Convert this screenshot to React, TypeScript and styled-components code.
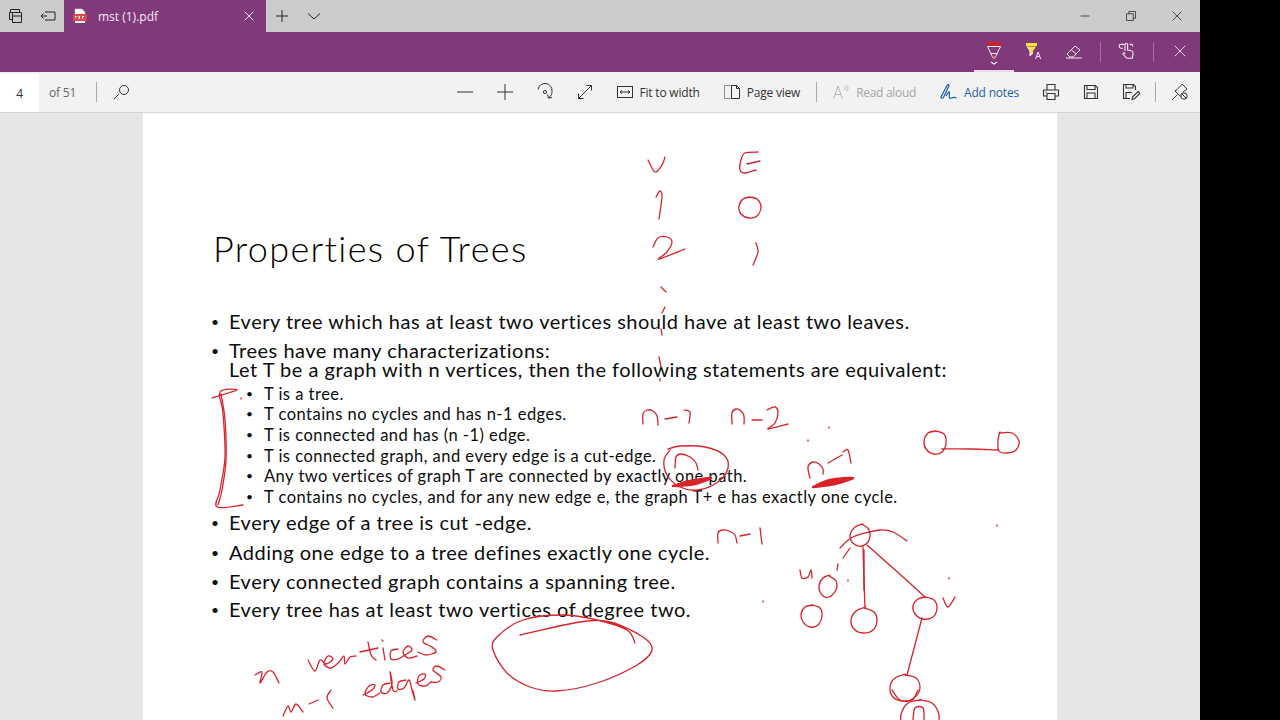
import styled, { createGlobalStyle } from 'styled-components'

const GlobalStyle = createGlobalStyle`
  html, body, #root {
    margin: 0;
    height: 100%;
    background: #000;
    overflow: hidden;
  }
`

const Screen = styled.div`
  width: 1200px;
  height: 720px;
  display: flex;
  flex-direction: column;
  overflow: hidden;
  font-family: 'Open Sans', 'Noto Sans', sans-serif;
`

const TabBar = styled.div`
  height: 32px;
  flex: none;
  display: flex;
  align-items: center;
  background: #cccccc;
`

const TabIcon = styled.div`
  width: 32px;
  height: 32px;
  flex: none;
  display: flex;
  align-items: center;
  justify-content: center;
  color: #222;
`

const Tab = styled.div`
  width: 202px;
  height: 32px;
  flex: none;
  display: flex;
  align-items: center;
  padding: 0 10px 0 8px;
  box-sizing: border-box;
  gap: 10px;
  background: #80397b;
  color: #f6ecf5;
  font-size: 12px;
`

const TabTitle = styled.span`
  flex: 1;
`

const WindowButtons = styled.div`
  margin-left: auto;
  display: flex;
`

const WindowButton = styled.div`
  width: 46px;
  height: 32px;
  display: flex;
  align-items: center;
  justify-content: center;
  color: #222;
`

const InkBar = styled.div`
  height: 40px;
  flex: none;
  display: flex;
  align-items: center;
  justify-content: flex-end;
  background: #80397b;
  color: #f4e9f3;
`

const InkButton = styled.div<{ $active?: boolean }>`
  width: 40px;
  height: 40px;
  display: flex;
  align-items: center;
  justify-content: center;
  box-sizing: border-box;
  padding-top: ${(p) => (p.$active ? 6 : 0)}px;
  border-bottom: 2px solid ${(p) => (p.$active ? '#f0d8ee' : 'transparent')};
`

const InkDivider = styled.div`
  width: 1px;
  height: 20px;
  margin: 0 6px;
  background: #a870a4;
`

const ToolBar = styled.div`
  height: 41px;
  flex: none;
  display: flex;
  align-items: center;
  background: #f2f2f2;
  border-bottom: 1px solid #d4d4d4;
  box-sizing: border-box;
  color: #333;
  font-size: 12px;
  letter-spacing: -0.2px;
`

const PageBox = styled.div`
  width: 39px;
  height: 38px;
  align-self: flex-end;
  display: flex;
  align-items: center;
  justify-content: center;
  background: #fff;
  color: #333;
  font-size: 12px;
`

const PageCount = styled.span`
  margin: 0 16px 0 10px;
  color: #666;
`

const ToolDivider = styled.div`
  width: 1px;
  height: 20px;
  margin: 0 4px;
  background: #a8a8a8;
`

const ToolGroup = styled.div`
  margin-left: auto;
  display: flex;
  align-items: center;
`

const IconButton = styled.div`
  width: 40px;
  height: 40px;
  flex: none;
  display: flex;
  align-items: center;
  justify-content: center;
  color: #333;
`

const TextButton = styled.div<{ $tone?: string }>`
  height: 40px;
  padding: 0 12px;
  display: flex;
  align-items: center;
  gap: 7px;
  white-space: nowrap;
  color: ${(p) => p.$tone || '#333'};
`

const ReadButton = styled(TextButton)`
  padding: 0 11px 0 12px;
  letter-spacing: -0.3px;
`

const Viewer = styled.div`
  flex: 1;
  min-height: 0;
  display: flex;
  justify-content: center;
  overflow: hidden;
  background: #e6e6e6;
`

const Page = styled.div`
  position: relative;
  width: 914px;
  flex: none;
  padding: 113px 0 0 70px;
  box-sizing: border-box;
  background: #fff;
  color: #0c0c0c;
  font-family: 'Lato', 'Open Sans', sans-serif;
`

const Title = styled.h1`
  margin: 0 0 42px;
  font-size: 36px;
  line-height: 44px;
  font-weight: 300;
  letter-spacing: 1.35px;
  color: #000;
`

const Bullets = styled.ul`
  margin: 0;
  padding: 0;
  list-style: none;
`

const Bullet = styled.li<{ $gap?: number }>`
  position: relative;
  padding-left: 16px;
  margin-top: ${(p) => p.$gap || 0}px;
  font-size: 20px;
  line-height: 19.5px;
  letter-spacing: 0.5px;
  white-space: nowrap;

  &::before {
    content: '•';
    position: absolute;
    left: -2px;
    font-size: 14px;
  }
`

const SubBullets = styled.ul`
  margin: 4px 0 0;
  padding: 0 0 0 35px;
  list-style: none;
`

const SubBullet = styled.li`
  position: relative;
  height: 20.7px;
  font-size: 16.5px;
  line-height: 20.7px;
  letter-spacing: 0.48px;
  white-space: nowrap;

  &::before {
    content: '•';
    position: absolute;
    left: -18px;
    font-size: 12px;
  }
`

const Ink = styled.svg`
  position: absolute;
  left: 0;
  top: 0;
  pointer-events: none;
`

const Line = ({ d, size = 16 }: { d: string; size?: number }) => (
  <svg width={size} height={size} viewBox="0 0 16 16" fill="none" stroke="currentColor" strokeWidth="1">
    <path d={d} />
  </svg>
)

const PdfBadge = () => (
  <svg width="16" height="16" viewBox="0 0 16 16">
    <path d="M3 1h7l3 3v3H3z" fill="#fff" stroke="#c8c8c8" strokeWidth="0.6" />
    <rect x="1" y="6" width="14" height="7" fill="#e0474c" />
    <path d="M3 13h10v2H3z" fill="#f5f5f5" />
    <path d="M3 8h1.5v1.5H3zM6.5 8H8v3H6.5zM10 8h2v1h-1v2h-1z" fill="#fff" />
  </svg>
)

const PenIcon = () => (
  <svg width="16" height="24" viewBox="0 0 16 24" fill="none" stroke="currentColor" strokeWidth="1">
    <rect x="1" y="0" width="14" height="4" fill="#c8232c" stroke="none" />
    <path d="M1.5 4.5L7 16h2l5.5-11.5zM5 11.5h6" />
    <path d="M6.5 14h3l-.5 2H7z" fill="#e0555a" stroke="none" />
    <path d="M5 20l3 2 3-2" strokeWidth="1.2" />
  </svg>
)

const HighlightIcon = () => (
  <svg width="18" height="18" viewBox="0 0 18 18" fill="none" stroke="currentColor" strokeWidth="1">
    <rect x="1" y="1" width="11" height="3" fill="#f5e33c" stroke="none" />
    <path d="M2 4.5l3 4.5v5l3-3V9l3-4.5z" fill="#f5e33c" stroke="none" />
    <path d="M2 4.5l3 4.5v5l3-3" />
    <path d="M10.5 17l2.6-7 2.6 7M11.5 14.6h3.2" />
  </svg>
)

const EraserIcon = () => (
  <svg width="18" height="18" viewBox="0 0 18 18" fill="none" stroke="currentColor" strokeWidth="1">
    <path d="M2 12l8-8 5 4-7 7H5zM6.5 8l5 4M1 16h16" />
  </svg>
)

const TouchIcon = () => (
  <svg width="18" height="18" viewBox="0 0 18 18" fill="none" stroke="currentColor" strokeWidth="1.1">
    <path d="M5 6.2H3a1.9 1.9 0 0 1 0-3.8h3.4" />
    <path d="M7 9V2.6a1.3 1.3 0 0 1 2.6 0V8l3.6.8c1.3.3 1.9 1.1 1.9 2.3 0 1.8-.4 3.5-1 5.2H8.8L5.2 12.4c-.8-1 .4-2.1 1.3-1.3l.9.8" />
    <path d="M11.5 2.4h2.5M14 2.4c.6.7.8 1.4.8 2.2" />
  </svg>
)

const RotateIcon = () => (
  <svg width="18" height="18" viewBox="0 0 18 18" fill="none" stroke="currentColor" strokeWidth="1">
    <path d="M2 6.5A7 7 0 0 1 16 8.5c0 3-1.5 5-3.5 6.5" />
    <circle cx="9" cy="9" r="1.6" />
    <path d="M11.5 11.5l1 3.6 3.5-.6" />
  </svg>
)

const FitIcon = () => (
  <svg width="16" height="14" viewBox="0 0 16 14" fill="none" stroke="currentColor" strokeWidth="1">
    <rect x="0.5" y="1.5" width="15" height="11" />
    <path d="M3 7h10M3 7l2-1.6M3 7l2 1.6M13 7l-2-1.6M13 7l-2 1.6" />
  </svg>
)

const PageViewIcon = () => (
  <svg width="16" height="16" viewBox="0 0 16 16" fill="none" stroke="currentColor" strokeWidth="1">
    <path d="M7.5 1.5H.5v13h7" strokeDasharray="1 1" />
    <path d="M7.5 1.5h5l3 3v10h-8zM12.5 1.5v3h3" />
  </svg>
)

const ReadIcon = () => (
  <svg width="16" height="16" viewBox="0 0 16 16" fill="none" stroke="#b4b4b4" strokeWidth="1">
    <path d="M.5 15L5 2l4.5 13M2 10.5h6M11.5 2c1 1 1 2.6 0 4M13.7.8c1.7 2 1.7 4.4 0 6.4" />
  </svg>
)

const NotesIcon = () => (
  <svg width="18" height="18" viewBox="0 0 18 18" fill="none" stroke="#1f5fa8" strokeWidth="1.2">
    <path d="M2 14L8 2.5c.9-1.6 2.4-1 1.8.6L4.5 14.5c-.6 1-3 1-2.5-.5z" />
    <path d="M7 13c1.2-2 3-5 3.4-4 .4 1.2-1 6 .6 6.4 1.6.3 3-2.2 6.5-.4" />
  </svg>
)

const PrintIcon = () => (
  <svg width="18" height="18" viewBox="0 0 18 18" fill="none" stroke="currentColor" strokeWidth="1.1">
    <path d="M5 7V1.5h8V7M5 13H1.5V7h15v6H13" />
    <path d="M5 10.5h8v6H5zM3.5 9h1" />
  </svg>
)

const SaveIcon = () => (
  <svg width="16" height="16" viewBox="0 0 16 16" fill="none" stroke="currentColor" strokeWidth="1.1">
    <path d="M1.5 1.5h11l2 2v11h-13zM4 1.5v4h8v-4M4 14.5V9h8v5.5" />
  </svg>
)

const SaveAsIcon = () => (
  <svg width="18" height="18" viewBox="0 0 18 18" fill="none" stroke="currentColor" strokeWidth="1.1">
    <path d="M8 15.5H1.5v-14h10l2 2V7M4 1.5V5h7V1.5M4 15.5V9.5h6" />
    <path d="M10 16.5l.7-2.6 5.4-5.4 1.8 1.8-5.4 5.4z" />
  </svg>
)

const PinIcon = () => (
  <svg width="18" height="18" viewBox="0 0 18 18" fill="none" stroke="currentColor" strokeWidth="1">
    <path d="M1 17l5.5-5.5M4 8l2-1.5 4-4L11 1l5 5-1.5 1L12 9M4 8l5.5 5.5" />
    <circle cx="13" cy="13" r="3.2" />
    <path d="M10.8 10.8l4.4 4.4" />
  </svg>
)

// freehand pen strokes, in screen coordinates of the video frame
const strokes: number[][] = [
  [648, 160, 655, 172, 662, 165, 665, 157],
  [758, 152, 745, 153, 741, 160, 740, 170, 745, 173, 756, 170],
  [747, 164, 760, 161],
  [656, 197, 660, 191, 662, 197, 659, 219],
  [749, 197, 757, 199, 761, 207, 757, 216, 749, 218, 741, 214, 739, 206, 743, 199, 750, 197],
  [653, 247, 658, 238, 667, 237, 672, 242, 667, 252, 659, 259, 685, 249],
  [756, 243, 758, 252, 753, 265],
  [661, 287, 666, 292],
  [665, 307, 662, 313],
  [661, 329, 662, 335],
  [659, 357, 661, 367],
  [660, 379, 660, 381],
  [212, 398, 237, 390, 220, 392, 223, 413, 225, 457, 220, 490, 217, 507, 243, 505],
  [221, 394, 225, 420, 226, 460, 222, 490, 218, 505],
  [241, 398, 241, 399],
  [643, 424, 643, 414, 647, 410, 653, 411, 657, 416, 658, 425],
  [665, 419, 677, 417],
  [684, 410, 690, 412, 689, 423],
  [732, 424, 732, 413, 736, 409, 741, 411, 744, 416, 744, 424],
  [752, 420, 762, 420],
  [767, 410, 775, 407, 778, 413, 775, 423, 768, 429, 788, 424],
  [668, 449, 680, 446, 705, 447, 724, 455, 728, 468, 718, 482, 698, 490, 680, 487, 667, 475, 664, 460, 670, 450],
  [675, 468, 676, 457, 681, 454, 690, 457, 696, 463, 698, 470],
  [810, 478, 808, 467, 813, 462, 819, 464, 823, 469, 823, 474],
  [828, 463, 842, 455],
  [843, 452, 848, 450, 851, 463],
  [829, 427, 829, 428],
  [808, 440, 808, 441],
  [935, 431, 944, 434, 946, 443, 942, 452, 934, 454, 926, 449, 924, 441, 928, 433, 936, 431],
  [999, 433, 1012, 433, 1019, 441, 1016, 450, 1007, 453, 999, 451, 998, 440, 1000, 432],
  [942, 449, 970, 449, 998, 450],
  [718, 543, 718, 533, 722, 530, 729, 531, 735, 535, 737, 543],
  [740, 536, 750, 534],
  [760, 528, 762, 544],
  [862, 524, 869, 530, 869, 540, 862, 546, 854, 544, 850, 536, 855, 527, 863, 524],
  [840, 548, 853, 537, 880, 530, 893, 532, 907, 541],
  [863, 547, 864, 580, 865, 608],
  [864, 550, 864, 590],
  [867, 545, 903, 577, 925, 597],
  [850, 548, 843, 558],
  [838, 564, 837, 570],
  [800, 570, 802, 578, 808, 577, 811, 570, 812, 578],
  [829, 576, 836, 581, 836, 590, 829, 597, 822, 595, 819, 586, 823, 578, 830, 575],
  [848, 580, 848, 581],
  [949, 578, 949, 579],
  [763, 601, 763, 602],
  [997, 525, 997, 526],
  [812, 605, 820, 608, 822, 616, 818, 625, 810, 627, 803, 622, 801, 614, 805, 607, 813, 605],
  [864, 608, 874, 612, 877, 621, 873, 630, 863, 633, 854, 629, 851, 620, 856, 611, 866, 607],
  [925, 597, 934, 600, 937, 608, 933, 617, 923, 619, 915, 614, 913, 606, 918, 599, 926, 597],
  [943, 598, 948, 607, 955, 597],
  [922, 618, 907, 675],
  [905, 675, 916, 678, 920, 688, 914, 698, 903, 701, 893, 697, 890, 687, 895, 678, 906, 674],
  [892, 690, 900, 700, 912, 700, 918, 690],
  [920, 700, 932, 703, 939, 715, 937, 730],
  [902, 730, 901, 715, 908, 703, 920, 700],
  [913, 720, 915, 708, 923, 708, 924, 720],
  [635, 643, 627, 630, 597, 620, 563, 615, 523, 620, 497, 637, 493, 650, 507, 673, 530, 687, 557, 691, 597, 683, 637, 665, 652, 650, 643, 637, 610, 622, 580, 622, 520, 635],
  [255, 675, 262, 672, 260, 683, 267, 672, 273, 672, 279, 683],
  [308, 660, 315, 671, 320, 660, 326, 664, 333, 659, 328, 656, 324, 664, 331, 668, 339, 662, 344, 656, 345, 664, 350, 657, 356, 656],
  [368, 642, 371, 655, 376, 660],
  [360, 652, 378, 648],
  [383, 648, 385, 660],
  [382, 640, 383, 641],
  [398, 649, 391, 651, 391, 659, 398, 659, 405, 655, 412, 650, 408, 646, 403, 652, 408, 658, 417, 656],
  [437, 640, 428, 636, 423, 642, 432, 647, 436, 652, 426, 655, 418, 652],
  [283, 716, 288, 706, 291, 712, 296, 704, 303, 712],
  [309, 704, 318, 700],
  [331, 690, 327, 698, 333, 708],
  [363, 695, 372, 690, 375, 685, 369, 686, 365, 694, 372, 697, 380, 693],
  [390, 683, 383, 685, 381, 692, 387, 693, 392, 684, 390, 672, 393, 690, 397, 691],
  [406, 680, 399, 682, 398, 689, 404, 688, 409, 680, 412, 690, 415, 700, 413, 691],
  [416, 683, 424, 679, 425, 674, 419, 676, 418, 684, 425, 686, 431, 682],
  [445, 670, 437, 666, 433, 670, 441, 677, 438, 682, 431, 682],
]

const smears: number[][] = [
  [673, 486, 690, 481, 711, 478, 695, 484, 676, 486],
  [813, 487, 830, 480, 853, 478, 835, 484, 814, 487],
]

// catmull-rom through the sampled points, so the ink does not look polygonal
const smooth = (p: number[]) => {
  let d = `M${p[0]} ${p[1]}`
  for (let i = 0; i < p.length - 2; i += 2) {
    const x0 = p[Math.max(i - 2, 0)]
    const y0 = p[Math.max(i - 1, 1)]
    const x1 = p[i]
    const y1 = p[i + 1]
    const x2 = p[i + 2]
    const y2 = p[i + 3]
    const x3 = p[Math.min(i + 4, p.length - 2)]
    const y3 = p[Math.min(i + 5, p.length - 1)]
    d += `C${x1 + (x2 - x0) / 6} ${y1 + (y2 - y0) / 6} ${x2 - (x3 - x1) / 6} ${y2 - (y3 - y1) / 6} ${x2} ${y2}`
  }
  return d
}

const subItems = [
  'T is a tree.',
  'T contains no cycles and has n-1 edges.',
  'T is connected and has (n -1) edge.',
  'T is connected graph, and every edge is a cut-edge.',
  'Any two vertices of graph T are connected by exactly one path.',
  'T contains no cycles, and for any new edge e, the graph T+ e has exactly one cycle.',
]

export default function App() {
  return (
    <Screen>
      <GlobalStyle />
      <TabBar>
        <TabIcon>
          <Line d="M2.5 4.5v-3h9v3M4.5 4.5h9v10h-9zM4.5 8h9M1.5 4.5h3v7h-3z" />
        </TabIcon>
        <TabIcon>
          <Line d="M1 8h6M1 8l2.5-2.5M1 8l2.5 2.5M5 4h10v8H5" />
        </TabIcon>
        <Tab>
          <PdfBadge />
          <TabTitle>mst (1).pdf</TabTitle>
          <Line size={14} d="M3 3l10 10M13 3L3 13" />
        </Tab>
        <TabIcon>
          <Line d="M8 2v12M2 8h12" />
        </TabIcon>
        <TabIcon>
          <Line d="M2 5.5l6 5.5 6-5.5" />
        </TabIcon>
        <WindowButtons>
          <WindowButton>
            <Line size={12} d="M2 8h12" />
          </WindowButton>
          <WindowButton>
            <Line size={12} d="M2 5h9v9H2zM5 5V2h9v9h-3" />
          </WindowButton>
          <WindowButton>
            <Line size={12} d="M2 2l12 12M14 2L2 14" />
          </WindowButton>
        </WindowButtons>
      </TabBar>
      <InkBar>
        <InkButton $active>
          <PenIcon />
        </InkButton>
        <InkButton>
          <HighlightIcon />
        </InkButton>
        <InkButton>
          <EraserIcon />
        </InkButton>
        <InkDivider />
        <InkButton>
          <TouchIcon />
        </InkButton>
        <InkDivider />
        <InkButton>
          <Line size={14} d="M2 2l12 12M14 2L2 14" />
        </InkButton>
      </InkBar>
      <ToolBar>
        <PageBox>4</PageBox>
        <PageCount>of 51</PageCount>
        <ToolDivider />
        <IconButton>
          <Line d="M1 15l5-5M6.5 6a4.5 4.5 0 1 0 9 0 4.5 4.5 0 1 0-9 0" />
        </IconButton>
        <ToolGroup>
          <IconButton>
            <Line d="M0 8h16" />
          </IconButton>
          <IconButton>
            <Line d="M8 0v16M0 8h16" />
          </IconButton>
          <IconButton>
            <RotateIcon />
          </IconButton>
          <IconButton>
            <Line d="M1.5 14.5l13-13M9.5 1.5h5v5M1.5 9.5v5h5" />
          </IconButton>
          <TextButton>
            <FitIcon />
            Fit to width
          </TextButton>
          <TextButton>
            <PageViewIcon />
            Page view
          </TextButton>
          <ToolDivider />
          <ReadButton $tone="#a6a6a6">
            <ReadIcon />
            Read aloud
          </ReadButton>
          <TextButton $tone="#1f5fa8">
            <NotesIcon />
            Add notes
          </TextButton>
          <IconButton>
            <PrintIcon />
          </IconButton>
          <IconButton>
            <SaveIcon />
          </IconButton>
          <IconButton>
            <SaveAsIcon />
          </IconButton>
          <ToolDivider />
          <IconButton>
            <PinIcon />
          </IconButton>
        </ToolGroup>
      </ToolBar>
      <Viewer>
        <Page>
          <Title>Properties of Trees</Title>
          <Bullets>
            <Bullet>Every tree which has at least two vertices should have at least two leaves.</Bullet>
            <Bullet $gap={9}>
              Trees have many characterizations:
              <br />
              Let T be a graph with n vertices, then the following statements are equivalent:
              <SubBullets>
                {subItems.map((item) => (
                  <SubBullet key={item}>{item}</SubBullet>
                ))}
              </SubBullets>
            </Bullet>
            <Bullet $gap={5}>Every edge of a tree is cut -edge.</Bullet>
            <Bullet $gap={11}>Adding one edge to a tree defines exactly one cycle.</Bullet>
            <Bullet $gap={9.5}>Every connected graph contains a spanning tree.</Bullet>
            <Bullet $gap={8.5}>Every tree has at least two vertices of degree two.</Bullet>
          </Bullets>
          <Ink width="914" height="607" viewBox="143 113 914 607" fill="none" stroke="#d8232a" strokeWidth="1.3" strokeLinecap="round" strokeLinejoin="round">
            {strokes.map((s, i) => (
              <path key={i} d={smooth(s)} />
            ))}
            {smears.map((s, i) => (
              <path key={i} d={smooth(s)} strokeWidth="2.4" fill="#d8232a" />
            ))}
          </Ink>
        </Page>
      </Viewer>
    </Screen>
  )
}
